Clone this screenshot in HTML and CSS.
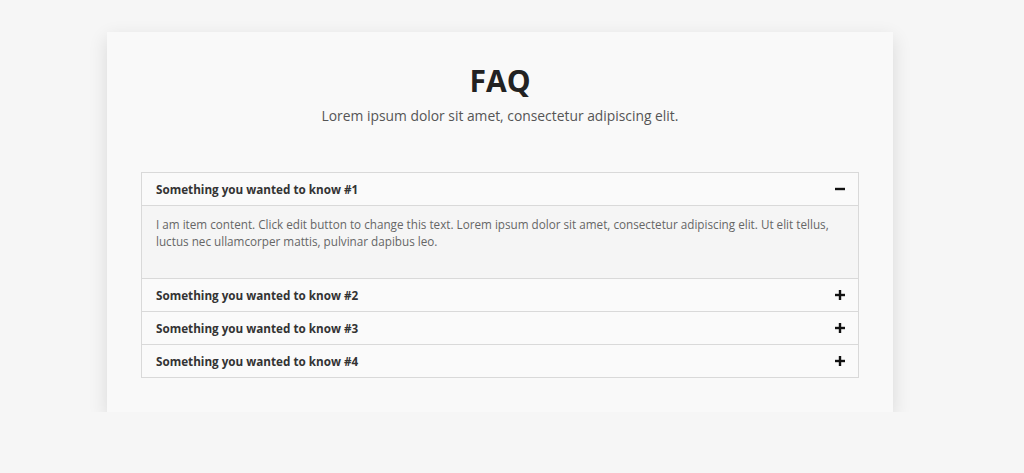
FILE: index.html
```html
<!DOCTYPE html>
<html>
<head>
<meta charset="utf-8">
<link rel="stylesheet" href="styles.css">
</head>
<body>
<div class="card">
  <h1 class="title">FAQ</h1>
  <p class="subtitle">Lorem ipsum dolor sit amet, consectetur adipiscing elit.</p>
  <div class="accordion">
    <div class="item">
      <div class="head"><span>Something you wanted to know #1</span>
        <svg class="icon" width="10" height="10" viewBox="0 0 10 10"><rect x="0" y="3.8" width="10" height="2.4" fill="#111"/></svg>
      </div>
      <div class="content">I am item content. Click edit button to change this text. Lorem ipsum dolor sit amet, consectetur adipiscing elit. Ut elit tellus, luctus nec ullamcorper mattis, pulvinar dapibus leo.</div>
    </div>
    <div class="item">
      <div class="head"><span>Something you wanted to know #2</span>
        <svg class="icon" width="10" height="10" viewBox="0 0 10 10"><rect x="0" y="3.8" width="10" height="2.4" fill="#111"/><rect x="3.8" y="0" width="2.4" height="10" fill="#111"/></svg>
      </div>
    </div>
    <div class="item">
      <div class="head"><span>Something you wanted to know #3</span>
        <svg class="icon" width="10" height="10" viewBox="0 0 10 10"><rect x="0" y="3.8" width="10" height="2.4" fill="#111"/><rect x="3.8" y="0" width="2.4" height="10" fill="#111"/></svg>
      </div>
    </div>
    <div class="item">
      <div class="head"><span>Something you wanted to know #4</span>
        <svg class="icon" width="10" height="10" viewBox="0 0 10 10"><rect x="0" y="3.8" width="10" height="2.4" fill="#111"/><rect x="3.8" y="0" width="2.4" height="10" fill="#111"/></svg>
      </div>
    </div>
  </div>
</div>
</body>
</html>
```
FILE: styles.css
```css
html, body {
  margin: 0;
  padding: 0;
  background: #f6f6f6;
  font-family: "Open Sans", "Liberation Sans", sans-serif;
}
.card {
  box-sizing: border-box;
  margin: 32px 0 0 107px;
  width: 786px;
  height: 380px;
  background: #f9f9f9;
  box-shadow: 0 6px 18px rgba(0, 0, 0, 0.12);
  padding: 30px 34px 0;
}
.title {
  margin: 0;
  text-align: center;
  font-size: 30px;
  line-height: 38px;
  font-weight: 700;
  color: #222;
}
.subtitle {
  margin: 6px 0 0;
  text-align: center;
  font-size: 13.85px;
  line-height: 20px;
  color: #555;
}
.accordion {
  margin-top: 46px;
  border: 1px solid #d9d9d9;
  border-bottom: none;
}
.item {
  border-bottom: 1px solid #d9d9d9;
}
.head {
  height: 32px;
  display: flex;
  align-items: center;
  justify-content: space-between;
  padding: 0 13px 0 14px;
  font-size: 11.7px;
  font-weight: 700;
  color: #333;
  background: #fafafa;
}
.icon {
  display: block;
}
.content {
  border-top: 1px solid #d9d9d9;
  height: 73px;
  box-sizing: border-box;
  padding: 10px 14px;
  font-size: 11.7px;
  line-height: 17px;
  color: #666;
  background: #f5f5f5;
}
```
